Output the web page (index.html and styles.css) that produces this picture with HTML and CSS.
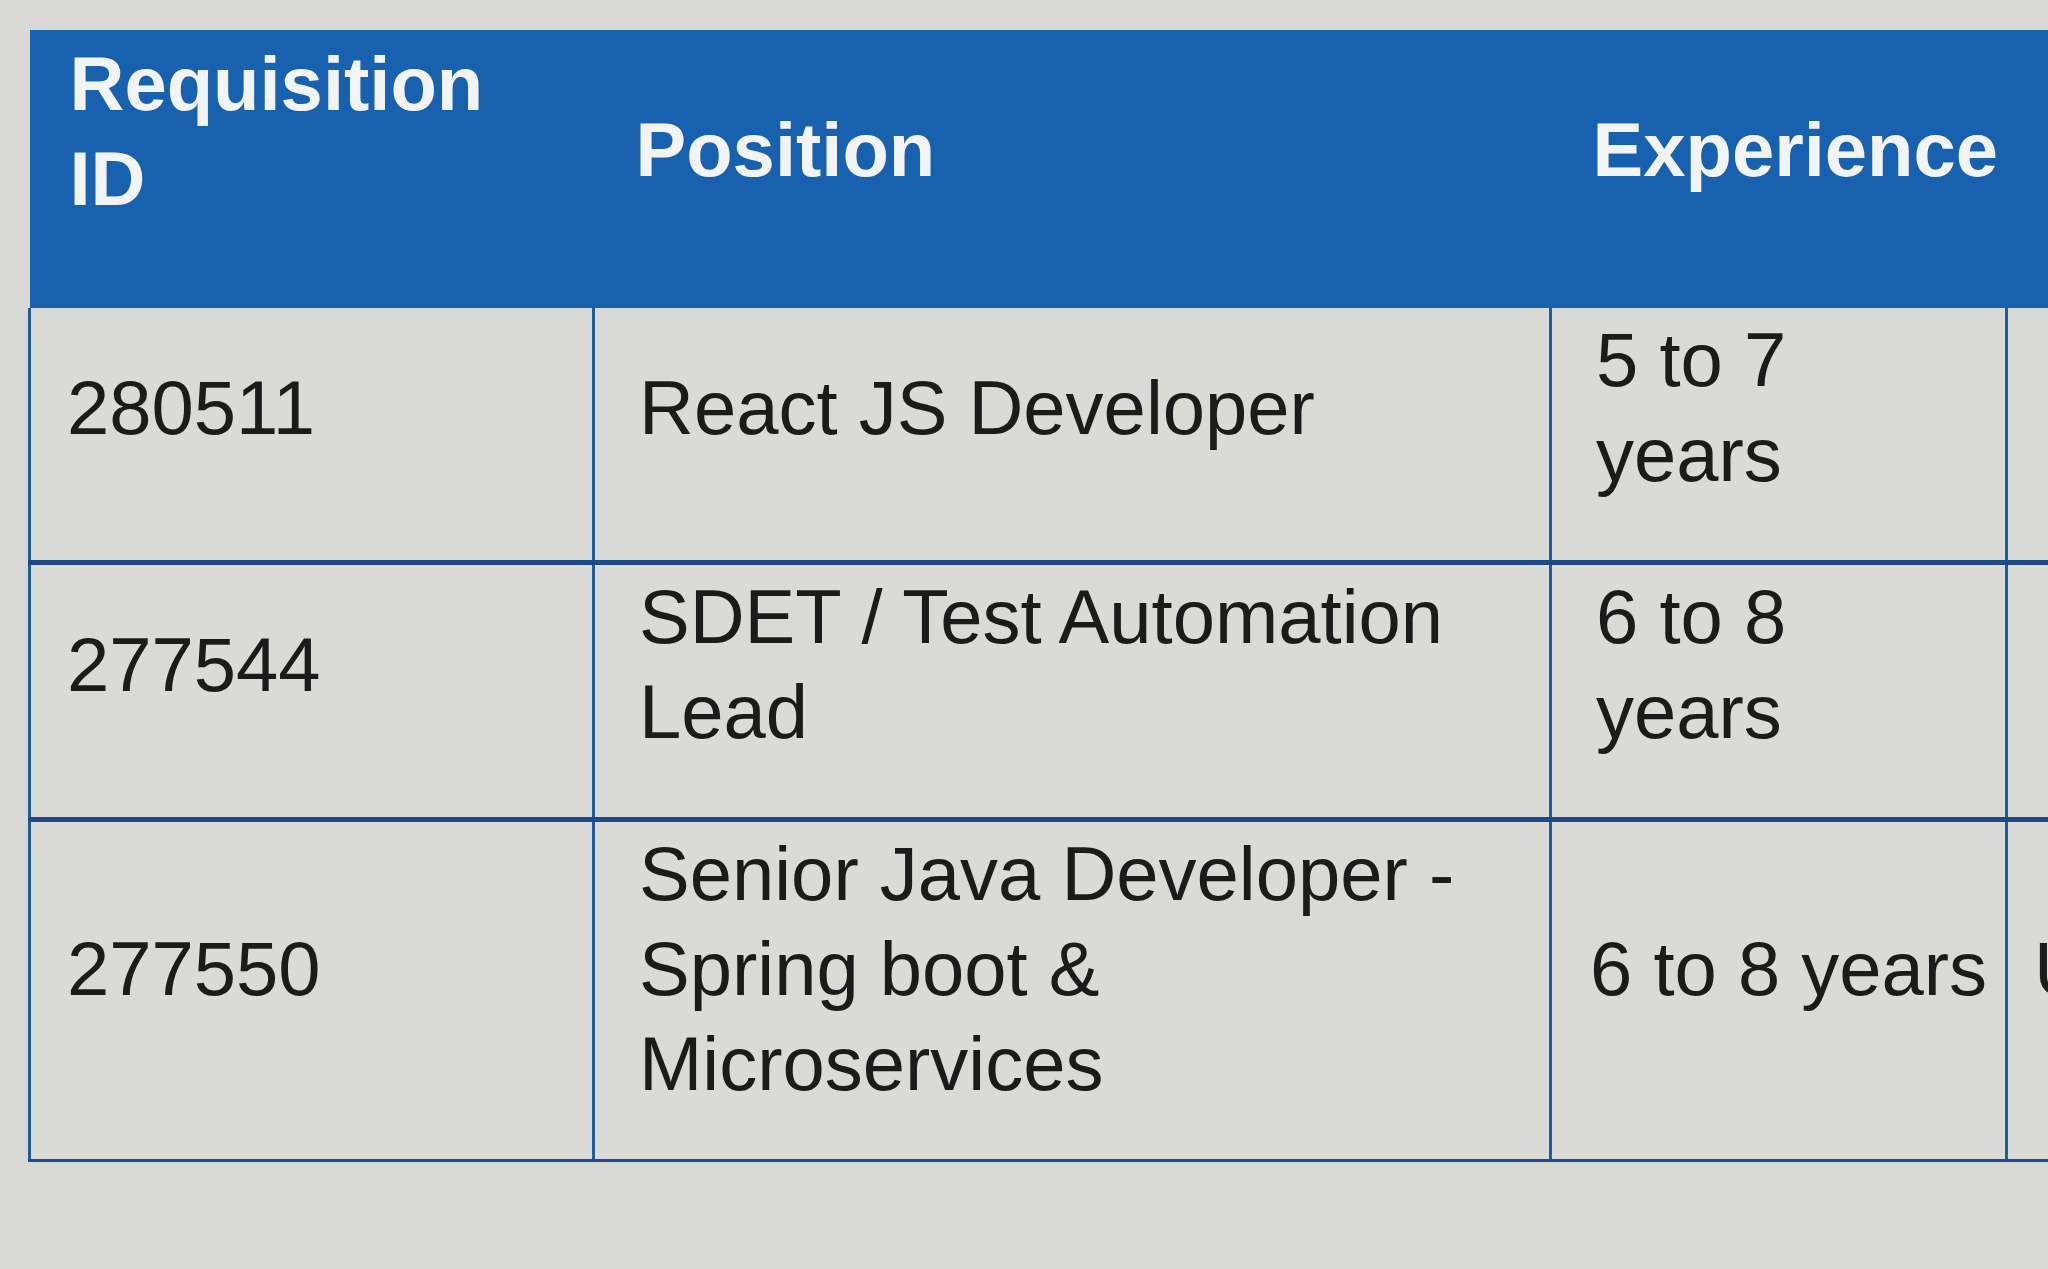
FILE: index.html
```html
<!DOCTYPE html>
<html lang="en">
<head>
<meta charset="utf-8">
<title>Requisitions</title>
<link rel="stylesheet" href="styles.css">
</head>
<body>
<div class="page">
  <table class="jobs">
    <colgroup>
      <col class="c-id">
      <col class="c-pos">
      <col class="c-exp">
      <col class="c-more">
    </colgroup>
    <thead>
      <tr>
        <th>Requisition ID</th>
        <th class="shift">Position</th>
        <th class="shift">Experience</th>
        <th></th>
      </tr>
    </thead>
    <tbody>
      <tr>
        <td>280511</td>
        <td>React JS Developer</td>
        <td>5 to 7 years</td>
        <td></td>
      </tr>
      <tr>
        <td>277544</td>
        <td>SDET / Test Automation Lead</td>
        <td>6 to 8 years</td>
        <td></td>
      </tr>
      <tr class="last">
        <td>277550</td>
        <td>Senior Java Developer - Spring boot &amp; Microservices</td>
        <td class="oneline">6 to 8 years</td>
        <td class="more">Unit</td>
      </tr>
    </tbody>
  </table>
</div>
</body>
</html>
```

FILE: styles.css
```css
html, body {
  margin: 0;
  padding: 0;
  background: #d9d9d6;
  overflow: hidden;
}

.page {
  width: 2048px;
  height: 1269px;
  padding: 30px 0 0 28px;
  box-sizing: border-box;
  overflow: hidden;
  background: #d8d8d5;
}

.jobs {
  border-collapse: collapse;
  table-layout: fixed;
  width: 2400px;
  font-family: "Liberation Sans", Arial, sans-serif;
  font-size: 76px;
  line-height: 95px;
  color: #1b1b1b;
}

.c-id { width: 564px; }
.c-pos { width: 957px; }
.c-exp { width: 456px; }
.c-more { width: 423px; }

.jobs thead th {
  background: #1761ae;
  color: #f2f3f4;
  font-weight: bold;
  text-align: left;
  vertical-align: middle;
  padding: 6px 30px 82px 42px;
  height: 190px;
}

.jobs thead th:first-child {
  padding-left: 40px;
}

.jobs thead th.shift {
  padding-top: 24px;
  padding-bottom: 64px;
}

.jobs tbody td {
  background: #dadad7;
  vertical-align: middle;
  padding: 4px 30px 58px 44px;
  border-left: 3px solid #1f5c9c;
  border-bottom: 5px solid #1b4b82;
}

.jobs tbody td:first-child {
  padding-left: 36px;
}

.jobs tbody tr.last td {
  border-bottom: 3px solid #1f4f86;
  padding-bottom: 48px;
}

.jobs tbody td.oneline {
  white-space: nowrap;
  padding-left: 38px;
  padding-right: 4px;
}

.jobs tbody td.more {
  padding-left: 26px;
}
```
